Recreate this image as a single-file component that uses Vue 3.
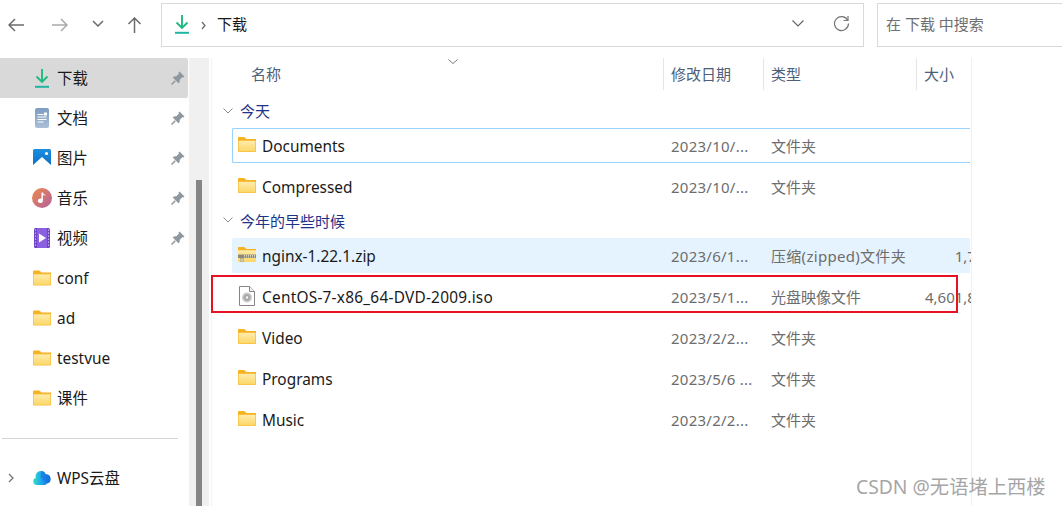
<script setup>
const navItems = [
  { label: '下载', icon: 'i-download', pin: true, active: true },
  { label: '文档', icon: 'i-doc', pin: true },
  { label: '图片', icon: 'i-pic', pin: true },
  { label: '音乐', icon: 'i-music', pin: true },
  { label: '视频', icon: 'i-video', pin: true },
  { label: 'conf', icon: 'i-folder' },
  { label: 'ad', icon: 'i-folder' },
  { label: 'testvue', icon: 'i-folder' },
  { label: '课件', icon: 'i-folder' },
]
const groups = [
  {
    title: '今天',
    cls: 'first',
    rows: [
      { name: 'Documents', icon: 'i-folder', date: '2023/10/...', type: '文件夹', state: 'focus' },
      { name: 'Compressed', icon: 'i-folder', date: '2023/10/...', type: '文件夹' },
    ],
  },
  {
    title: '今年的早些时候',
    cls: 'second',
    rows: [
      { name: 'nginx-1.22.1.zip', icon: 'i-zip', date: '2023/6/1...', type: '压缩(zipped)文件夹', size: '1,742 KB', state: 'selected' },
      { name: 'CentOS-7-x86_64-DVD-2009.iso', icon: 'i-iso', date: '2023/5/1...', type: '光盘映像文件', size: '4,601,856 KB', state: 'long' },
      { name: 'Video', icon: 'i-folder', date: '2023/2/2...', type: '文件夹' },
      { name: 'Programs', icon: 'i-folder', date: '2023/5/6 ...', type: '文件夹' },
      { name: 'Music', icon: 'i-folder', date: '2023/2/2...', type: '文件夹' },
    ],
  },
]
</script>

<template>
  <div class="app">
    <svg class="sprite" aria-hidden="true">
      <defs>
        <linearGradient id="g-folder" x1="0" y1="0" x2="0" y2="1">
          <stop offset="0" stop-color="#ffecab" />
          <stop offset="1" stop-color="#fcd768" />
        </linearGradient>
        <linearGradient id="g-doc" x1="0" y1="0" x2="0" y2="1">
          <stop offset="0" stop-color="#7d9cc0" />
          <stop offset="1" stop-color="#a9bfd8" />
        </linearGradient>
        <linearGradient id="g-pic" x1="0" y1="0" x2="0" y2="1">
          <stop offset="0" stop-color="#1a8ee0" />
          <stop offset="1" stop-color="#0f6cc4" />
        </linearGradient>
        <linearGradient id="g-music" x1="0" y1="0" x2="1" y2="1">
          <stop offset="0" stop-color="#ee8a4c" />
          <stop offset="1" stop-color="#b2609f" />
        </linearGradient>
        <linearGradient id="g-cloud" x1="0" y1="0" x2="1" y2="0">
          <stop offset="0" stop-color="#2fe0c8" />
          <stop offset="0.55" stop-color="#1d9cf0" />
          <stop offset="1" stop-color="#1668dc" />
        </linearGradient>
        <radialGradient id="g-disc">
          <stop offset="0" stop-color="#f2f2f2" />
          <stop offset="0.3" stop-color="#9a9a9a" />
          <stop offset="1" stop-color="#d4d4d4" />
        </radialGradient>
        <symbol id="i-folder" viewBox="0 0 18 15">
          <path d="M0 1.2C0 .5.5 0 1.2 0h4.6c.5 0 .8.2 1.1.5L8.5 2H18v2H0z" fill="#f6b320" />
          <path d="M0 3.2h18V14c0 .6-.4 1-1 1H1c-.6 0-1-.4-1-1z" fill="#f5bd3c" />
          <rect x="0.7" y="3.9" width="16.6" height="10.4" fill="url(#g-folder)" />
        </symbol>
        <symbol id="i-zip" viewBox="0 0 18 15">
          <path d="M0 1.2C0 .5.5 0 1.2 0h4.6c.5 0 .8.2 1.1.5L8.5 2H18v2H0z" fill="#f6b320" />
          <path d="M0 3.2h18V14c0 .6-.4 1-1 1H1c-.6 0-1-.4-1-1z" fill="url(#g-folder)" />
          <path d="M0 7.5h18v3.6H5.5V15H2.5v-3.9H0z" fill="#8f8a78" />
          <path d="M6 8.6h12M6 10h12" stroke="#e8e3c8" stroke-dasharray="1 1" fill="none" />
          <rect x="2.8" y="11.5" width="2.4" height="3.2" fill="#cfcab4" />
        </symbol>
        <symbol id="i-iso" viewBox="0 0 16 20">
          <path d="M.5.5h10.2l4.8 5v14H.5z" fill="#fff" stroke="#858585" />
          <path d="M10.5.5v5h5" fill="#f2f2f2" stroke="#858585" />
          <circle cx="8" cy="11.5" r="5" fill="url(#g-disc)" />
          <circle cx="8" cy="11.5" r="1.3" fill="#f4f4f4" />
        </symbol>
        <symbol id="i-download" viewBox="0 0 16 20">
          <path d="M8 1v13M2.5 8.5 8 14l5.500-5.500" fill="none" stroke="#20b97f" stroke-width="1.9" />
          <path d="M1 18.8h14" stroke="#1fb5a0" stroke-width="2" />
        </symbol>
        <symbol id="i-doc" viewBox="0 0 16 20">
          <rect width="14" height="20" x="1" rx="2" fill="url(#g-doc)" />
          <path d="M3.5 6.5h6M3.5 9h9M3.5 11.5h9M3.5 14h6" stroke="#fff" stroke-width="1" />
          <rect x="10" y="4.5" width="3" height="3" fill="#fff" />
        </symbol>
        <symbol id="i-pic" viewBox="0 0 18 18">
          <rect width="18" height="18" rx="1.5" fill="url(#g-pic)" />
          <path d="M0 16 9 8l9 8v2H0z" fill="#fff" />
          <circle cx="13.5" cy="4.5" r="1.6" fill="#fff" />
        </symbol>
        <symbol id="i-music" viewBox="0 0 20 20">
          <circle cx="10" cy="10" r="10" fill="url(#g-music)" />
          <path d="M9.5 4.5h1.4v8.3a2.5 2.2 0 1 1-1.4-2V4.5zM10.900 4.500c.3 1.600 2 1.800 2.800 3.200-1-.4-2-.7-2.800-.7z" fill="#fff" />
        </symbol>
        <symbol id="i-video" viewBox="0 0 16 20">
          <rect width="16" height="20" rx="1.500" fill="#6d3fc4" />
          <rect x="3" y="0" width="10" height="20" fill="#8a5fe0" />
          <path d="M5 5.500v9l7-4.500z" fill="#fff" />
          <path d="M1.500 1.500v17M14.500 1.500v17" stroke="#d9c8f5" stroke-width="1.200" stroke-dasharray="1.200 1.800" />
        </symbol>
        <symbol id="i-pin" viewBox="0 0 14 14">
          <path d="M8.500.5 13.500 5.500 12.500 6.500 11.500 6 8.800 8.700 8.600 11.200 7.500 12.200 1.800 6.500 2.800 5.400 5.300 5.200 8 2.500 7.500 1.500z" fill="#8d979f" />
          <path d="M4.300 9.700.5 13.500" stroke="#8d979f" stroke-width="1.500" />
        </symbol>
        <symbol id="i-cloud" viewBox="0 0 19 15">
          <path d="M4 15a4 4 0 0 1-1-7.800A5.500 5.500 0 0 1 8.500 0a5.500 5.500 0 0 1 5 3.500 5 5 0 0 1 1 9.900 4 4 0 0 1-1.500 1.600z" fill="url(#g-cloud)" />
          <path d="M8.500 0a5.500 5.500 0 0 1 5 3.500 5 5 0 0 1 1 9.900L8 7z" fill="#1673e0" opacity=".55" />
        </symbol>
      </defs>
    </svg>

    <header class="topbar">
      <div class="navbtns">
        <svg class="btn b-back" viewBox="0 0 16 14"><path d="M16 7H1M7 1 1 7l6 6" /></svg>
        <svg class="btn b-fwd" viewBox="0 0 16 14"><path d="M0 7h15M9 1l6 6-6 6" /></svg>
        <svg class="btn b-down" viewBox="0 0 12 7"><path d="M1 1l5 5 5-5" /></svg>
        <svg class="btn b-up" viewBox="0 0 15 16"><path d="M7.500 16V1M1.500 7l6-6 6 6" /></svg>
      </div>
      <div class="address">
        <svg class="addr-icon"><use href="#i-download" /></svg>
        <svg class="addr-sep" viewBox="0 0 5 9"><path d="M1 1l3 3.500L1 8" /></svg>
        <span class="addr-text">下载</span>
        <span class="spacer"></span>
        <svg class="addr-drop" viewBox="0 0 12 7"><path d="M.5.5 6 6l5.500-5.500" /></svg>
        <svg class="addr-refresh" viewBox="0 0 17 17"><path d="M14.800 5.500A7 7 0 1 0 15.500 8.500" /><path d="M15 1v4.500h-4.500" /></svg>
      </div>
      <div class="search">在 下载 中搜索</div>
    </header>

    <div class="body">
      <nav class="nav">
        <div v-for="item in navItems" :key="item.label" class="nav-row" :class="{ active: item.active }">
          <svg class="nav-icon" :class="item.icon"><use :href="'#' + item.icon" /></svg>
          <span class="nav-label">{{ item.label }}</span>
          <svg v-if="item.pin" class="pin"><use href="#i-pin" /></svg>
        </div>
        <div class="nav-divider"></div>
        <div class="nav-row cloud">
          <svg class="cloud-arrow" viewBox="0 0 6 10"><path d="M1 1l4 4-4 4" /></svg>
          <svg class="nav-icon"><use href="#i-cloud" /></svg>
          <span class="nav-label">WPS云盘</span>
        </div>
      </nav>

      <div class="track"><div class="thumb"></div></div>

      <main class="main">
        <div class="col-head">
          <div class="hcell h-name">名称
            <svg class="sort" viewBox="0 0 10 5"><path d="M.5.500 5 4.500 9.500.5" /></svg>
          </div>
          <div class="hcell">修改日期</div>
          <div class="hcell">类型</div>
          <div class="hcell">大小</div>
        </div>

        <section v-for="g in groups" :key="g.title" class="group" :class="g.cls">
          <div class="group-title">
            <svg class="group-chev" viewBox="0 0 10 6"><path d="M.5.500 5 5 9.500.5" /></svg>
            <span>{{ g.title }}</span>
          </div>
          <div v-for="r in g.rows" :key="r.name" class="row" :class="r.state">
            <div class="c-name">
              <svg class="file-icon" :class="{ iso: r.icon === 'i-iso' }"><use :href="'#' + r.icon" /></svg>
              <span class="file-name">{{ r.name }}</span>
            </div>
            <div class="c-date">{{ r.date }}</div>
            <div class="c-type">{{ r.type }}</div>
            <div class="c-size">{{ r.size }}</div>
          </div>
        </section>
      </main>
      <div class="redbox"></div>
    </div>

    <div class="watermark">CSDN @无语堵上西楼</div>
  </div>
</template>

<style>
html, body { margin: 0; background: #fff; }
</style>

<style scoped>
.app {
  position: relative;
  width: 1062px;
  height: 506px;
  overflow: hidden;
  background: #fff;
  font-family: "Noto Sans", "Noto Sans CJK SC", sans-serif;
  font-size: 15px;
  color: #1a1a1a;
  display: flex;
  flex-direction: column;
}
.sprite { width: 0; height: 0; display: block; }
.topbar {
  height: 58px;
  flex: none;
  display: flex;
  align-items: flex-start;
  padding-top: 3px;
  box-sizing: border-box;
}
.navbtns { width: 161px; height: 44px; display: flex; align-items: center; flex: none; }
.btn { fill: none; stroke: #6b6b6b; stroke-width: 1.500; flex: none; }
.b-back { width: 16px; height: 14px; margin-left: 8px; }
.b-fwd { width: 16px; height: 14px; margin-left: 28px; stroke: #a9a9a9; }
.b-down { width: 12px; height: 7px; margin-left: 24px; margin-top: -3px; }
.b-up { width: 15px; height: 16px; margin-left: 23px; }
.address {
  width: 703px;
  height: 44px;
  box-sizing: border-box;
  border: 1.500px solid #d9d9d9;
  display: flex;
  align-items: center;
  flex: none;
}
.addr-icon { width: 16px; height: 20px; margin-left: 12px; margin-top: -2px; }
.addr-sep { width: 5px; height: 9px; margin-left: 11px; fill: none; stroke: #666; stroke-width: 1.200; }
.addr-text { margin-left: 11px; font-size: 15px; margin-top: -3px; }
.spacer { flex: 1; }
.addr-drop { width: 12px; height: 7px; fill: none; stroke: #666; stroke-width: 1.200; margin-right: 29px; margin-top: -3px; }
.addr-refresh { width: 17px; height: 17px; fill: none; stroke: #777; stroke-width: 1.200; margin-right: 13px; margin-top: -4px; }
.search {
  margin-left: 13px;
  flex: 1;
  height: 44px;
  box-sizing: border-box;
  border: 1.500px solid #d9d9d9;
  border-right: 0;
  padding-left: 8px;
  line-height: 41px;
  color: #6f6f6f;
  font-size: 15px;
}
.body { flex: 1; display: flex; min-height: 0; position: relative; }
.nav { width: 188px; flex: none; margin-right: 1px; }
.nav-row {
  height: 40px;
  display: flex;
  align-items: center;
  padding-left: 33px;
}
.nav-row.active { background: #d9d9d9; border-radius: 0 2px 2px 0; }
.nav-icon { width: 18px; height: 20px; flex: none; margin-top: -1px; }
.nav-icon.i-music { width: 20px; margin-left: -1px; margin-right: -1px; margin-top: 0; }
.nav-label { margin-left: 6px; margin-top: 2px; font-size: 15.400px; line-height: 20px; }
.pin { width: 14px; height: 14px; margin-left: auto; margin-right: 3px; }
.nav-divider { height: 1px; width: 176px; margin: 20px 0 19px 2px; background: #d4d4d4; }
.nav-row.cloud { padding-left: 8px; }
.cloud-arrow { width: 6px; height: 10px; fill: none; stroke: #777; stroke-width: 1.300; margin-right: 19px; flex: none; }
.track { width: 20px; flex: none; background: #f0f0f0; display: flex; justify-content: center; }
.thumb { width: 6px; margin-top: 122px; background: #858585; flex: none; margin-left: -1px; }
.main {
  margin-left: 2px;
  width: 761px;
  border-left: 1px solid #f3f3f3;
  border-right: 1px solid #f0f0f0;
  overflow: hidden;
  padding-left: 20px;
  box-sizing: border-box;
}
.col-head, .row {
  display: grid;
  grid-template-columns: 431px 100px 153px 100px;
  width: 738px;
}
.col-head { height: 32px; }
.hcell {
  border-left: 1px solid #e5e5e5;
  padding-left: 7px;
  line-height: 32px;
  color: #4c607a;
  font-size: 15px;
  white-space: nowrap;
  position: relative;
}
.h-name { border-left: 0; padding-left: 19px; }
.sort { position: absolute; left: 216px; top: 1px; width: 10px; height: 5px; fill: none; stroke: #777; stroke-width: 1; }
.group-title {
  display: flex;
  align-items: center;
  color: #1e3287;
  font-size: 15px;
  margin-left: -9px;
  height: 38px;
  box-sizing: border-box;
  padding-top: 3px;
}
.group.second .group-title { height: 28px; padding-top: 0; padding-bottom: 8px; }
.group-chev { width: 10px; height: 6px; fill: none; stroke: #8a8a8a; stroke-width: 1; margin-right: 7px; }
.row {
  height: 35px;
  align-items: center;
  margin-bottom: 6px;
  white-space: nowrap;
}
.row.focus { box-shadow: inset 1px 0 #99d1ff, inset 0 1px #99d1ff, inset 0 -1px #99d1ff; border-radius: 2px 0 0 2px; }
.row.selected { background: #e5f3ff; border-radius: 2px 0 0 2px; }
.c-name { display: flex; align-items: center; padding-left: 6px; font-size: 15.400px; color: #1a1a1a; }
.file-name { margin-top: 2px; }
.row.long .c-name { letter-spacing: 0.240px; }
.file-icon { width: 18px; height: 15px; margin-right: 6px; flex: none; margin-top: -2px; }
.file-icon.iso { width: 16px; height: 20px; margin-right: 7px; margin-left: 1px; margin-top: -1px; }
.c-date, .c-type, .c-size { color: #6d6d6d; font-size: 15px; }
.c-date { letter-spacing: 0.250px; }
.c-date, .c-type { padding-left: 8px; }
.c-size { text-align: right; }
.row.selected .c-type { letter-spacing: 0.300px; }
.redbox {
  position: absolute;
  left: 211px;
  top: 217px;
  width: 747px;
  height: 38px;
  box-sizing: border-box;
  border: 2px solid #e81123;
}
.watermark {
  position: absolute;
  left: 856px;
  top: 474px;
  font-size: 19.300px;
  line-height: 26px;
  color: #a6a6a6;
  white-space: nowrap;
  text-shadow: 0 0 1px #fff;
}
</style>
